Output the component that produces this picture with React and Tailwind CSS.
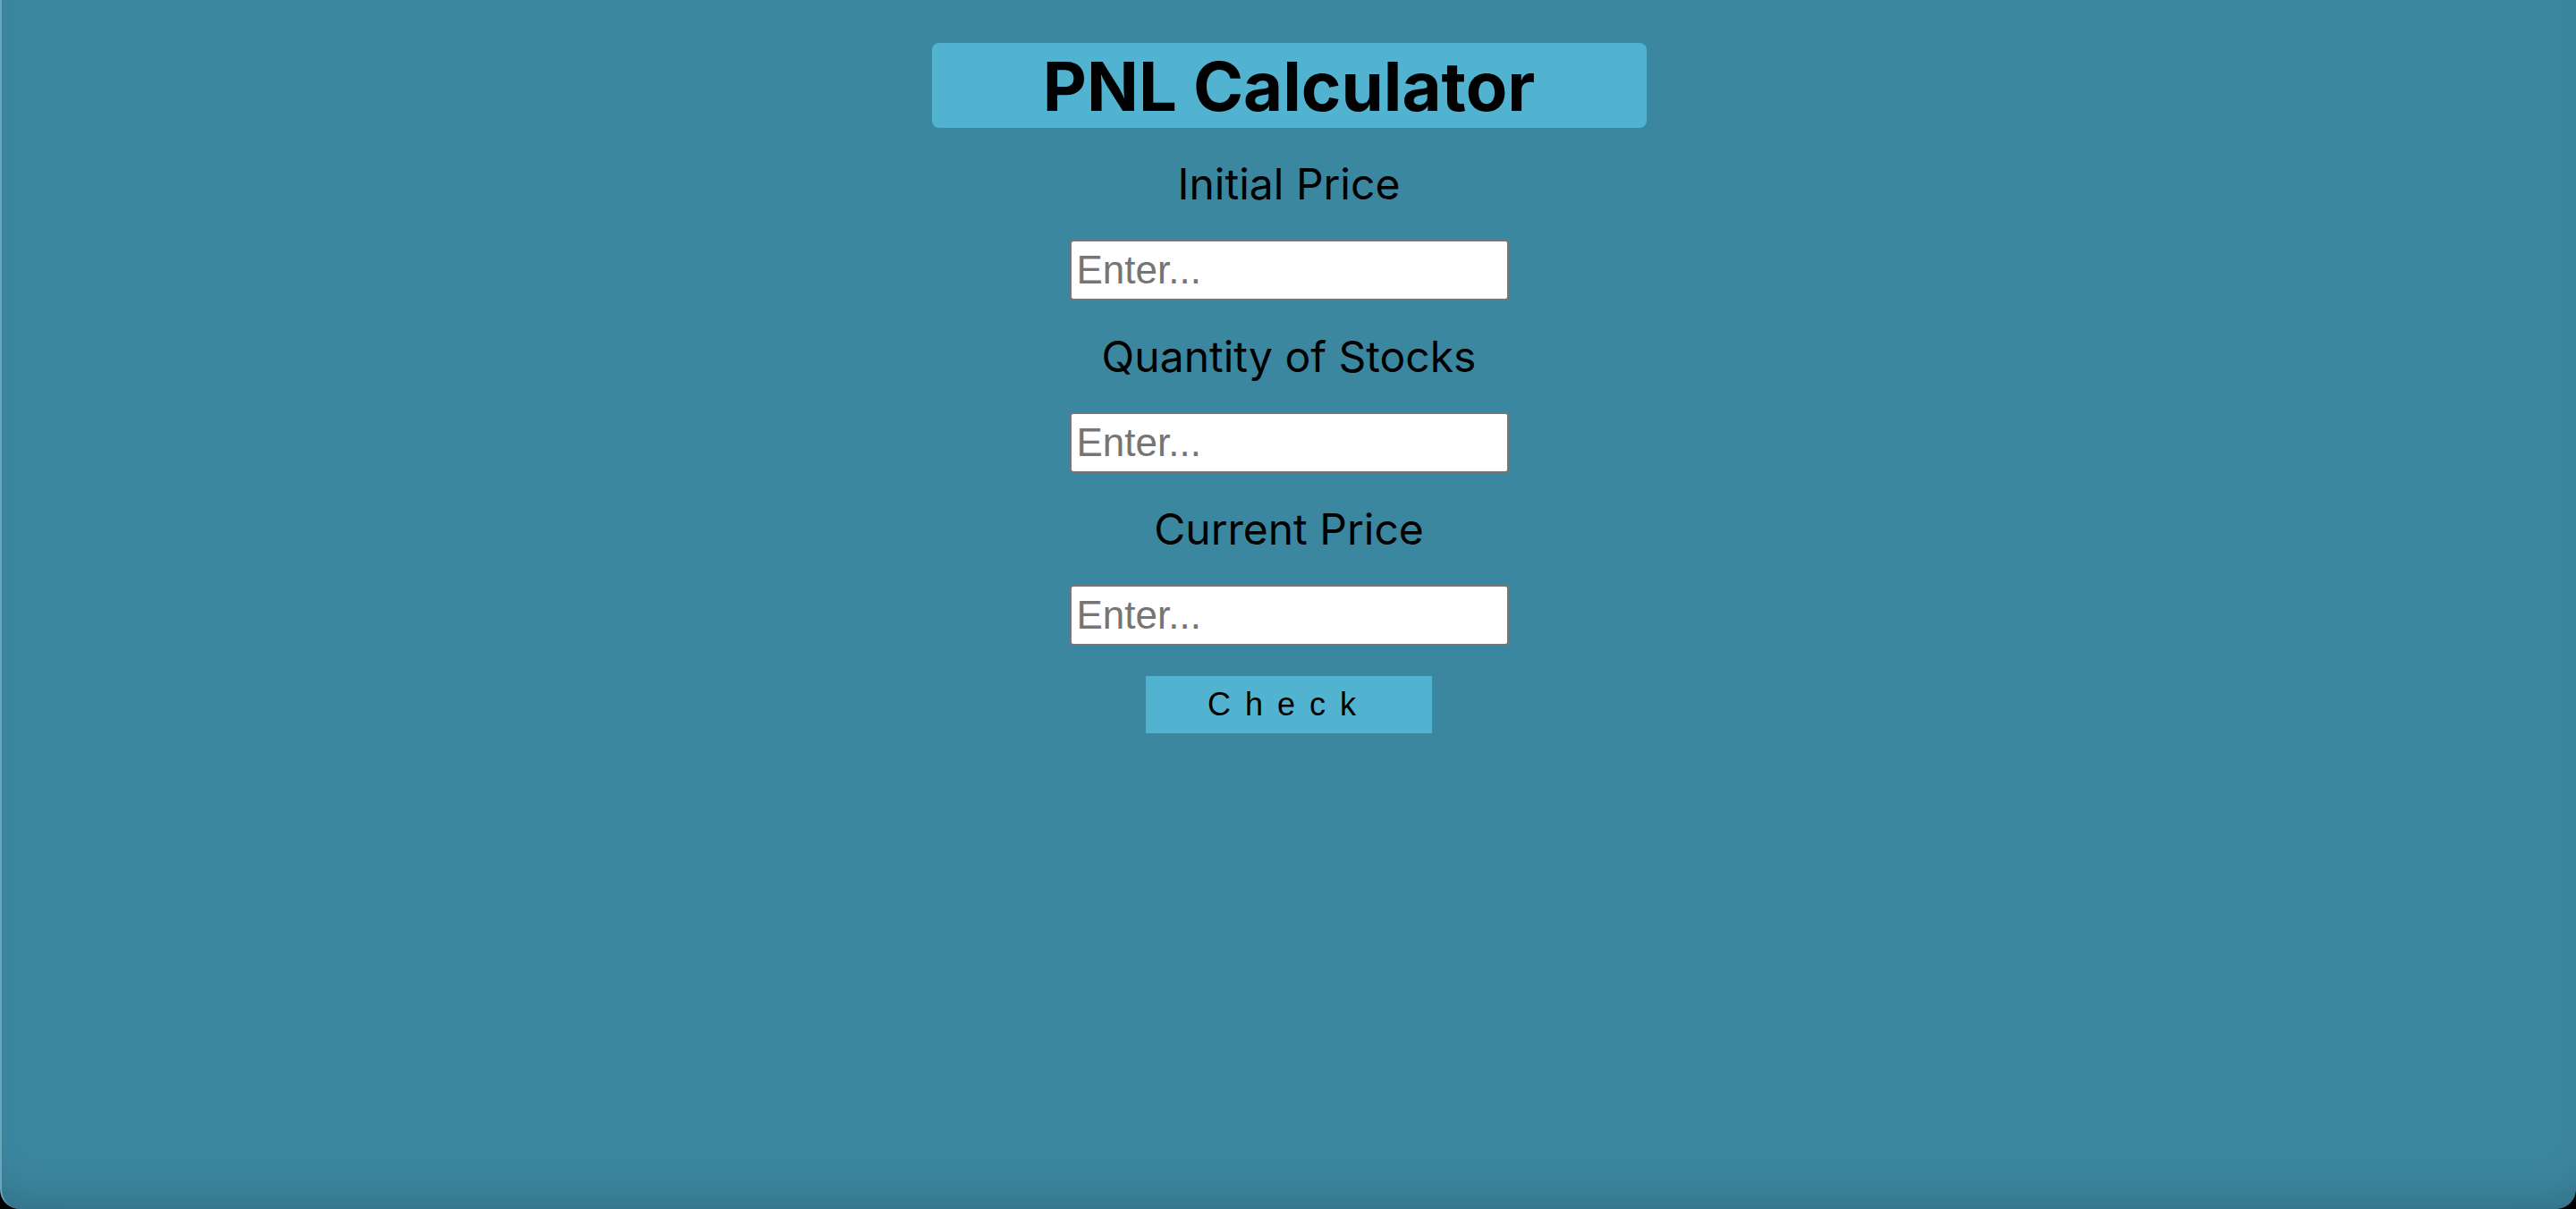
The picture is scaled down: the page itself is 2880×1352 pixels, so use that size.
import React from "react";

const fields = ["Initial Price", "Quantity of Stocks", "Current Price"];

const App = () => {
  return (
    <div className="h-screen w-full bg-black">
      <div className="h-full w-full rounded-b-[22px] border-l-2 border-[#69a6ba] bg-[#3c87a0] shadow-[inset_0_-40px_50px_-30px_rgba(0,0,0,0.18)]">
        <div className="flex flex-col items-center pt-[48px]">
          {/* Header */}
          <div className="flex h-[95px] w-[799px] items-center justify-center rounded-[8px] bg-[#52b3d0]">
            <h1 className="font-['Inter',sans-serif] text-[76px] font-bold leading-none text-black">
              PNL Calculator
            </h1>
          </div>

          {fields.map((label) => (
            <div key={label} className="flex flex-col items-center">
              <label className="flex h-[125px] items-center font-['Inter',sans-serif] text-[48px] leading-none text-black">
                {label}
              </label>
              <input
                type="number"
                placeholder="Enter..."
                className="h-[68px] w-[491px] rounded-[4px] border-2 border-[#767676] bg-white px-[6px] font-['Liberation_Sans',Arial,sans-serif] text-[44px] text-black outline-none placeholder:text-[#757575]"
              />
            </div>
          ))}

          <button className="mt-[34px] flex h-[64px] w-[320px] items-center justify-center bg-[#52b3d0] font-['Liberation_Sans',Arial,sans-serif] text-[36px] tracking-[16px] text-black">
            Check
          </button>
        </div>
      </div>
    </div>
  );
};

export default App;
